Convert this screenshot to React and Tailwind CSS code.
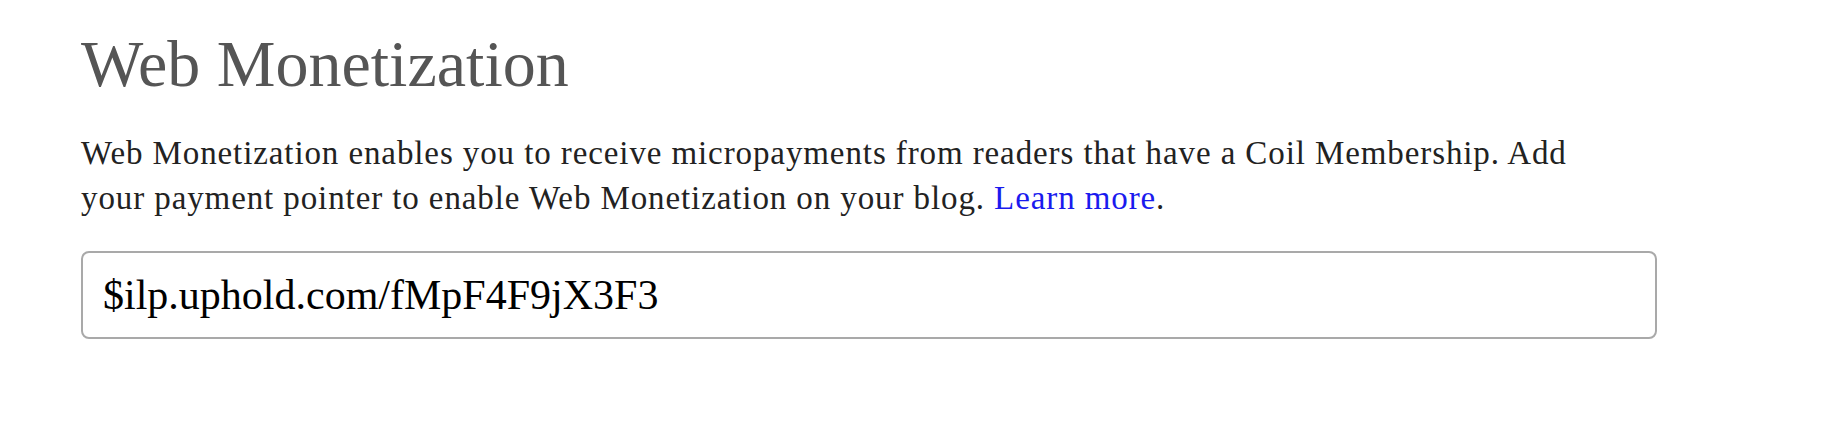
import React, { useState } from 'react'

export default function App() {
  const [pointer, setPointer] = useState('$ilp.uphold.com/fMpF4F9jX3F3')

  return (
    <div className="min-h-[434px] bg-white pl-[81px] pt-[26px] font-['Liberation_Serif',serif]">
      <div className="w-[1576px]">
        <h2 className="text-[66px] leading-[76px] font-normal text-[#555555]">Web Monetization</h2>
        <p className="mt-[29px] max-w-[1530px] text-[33px] leading-[45px] tracking-[0.9px] text-[#222222]">
          Web Monetization enables you to receive micropayments from readers that have a Coil Membership. Add your payment pointer to enable Web Monetization on your blog.{' '}
          <a href="#" className="text-[#1a1aee]">Learn more</a>.
        </p>
        <input
          type="text"
          value={pointer}
          onChange={(e) => setPointer(e.target.value)}
          className="mt-[30px] block h-[88px] w-full rounded-lg border-2 border-[#a9a9a9] bg-white px-[20px] text-[42px] text-black outline-none font-['Liberation_Serif',serif]"
        />
      </div>
    </div>
  )
}
